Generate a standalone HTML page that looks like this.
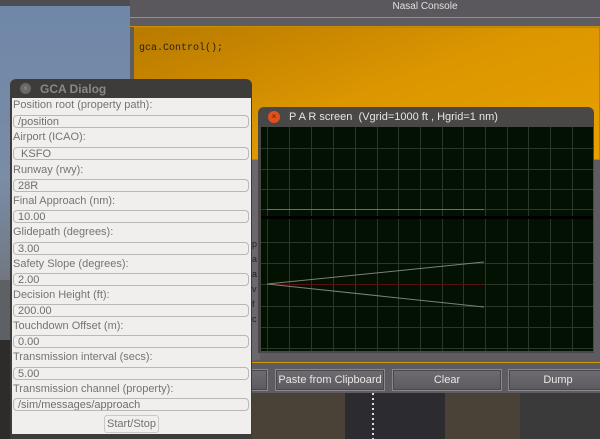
<!DOCTYPE html>
<html><head><meta charset="utf-8"><style>
*{margin:0;padding:0;box-sizing:border-box}
body{width:600px;height:439px;overflow:hidden;position:relative;font-family:"Liberation Sans","DejaVu Sans",sans-serif;background:#4a4236}
.abs{position:absolute}
.lbl{position:absolute;left:14px;font-size:11px;color:#747474;line-height:13px}
.fld{position:absolute;left:13px;width:236px;height:13px;border:1px solid #b8b8b8;border-radius:4px;background:#f0efed;font-size:11px;color:#6e6e6e;line-height:12px;padding-left:4px;overflow:hidden}
.btn{position:absolute;top:369px;height:22px;background:linear-gradient(#6e6c70,#5c5a5e);border:1px solid #8a888c;color:#e8e8e8;font-size:11px;text-align:center;line-height:20px;box-shadow:inset 0 0 0 1px #4a484c}
</style></head><body>
<div class="abs" style="left:0;top:0;width:130px;height:300px;background:linear-gradient(#6f87a8,#7a8ca6 60%,#6f737a)"></div>
<div class="abs" style="left:0;top:280px;width:130px;height:60px;background:#5d6064"></div>
<div class="abs" style="left:0;top:340px;width:130px;height:99px;background:#2e2c2a"></div>
<div class="abs" style="left:0;top:0;width:130px;height:6px;background:#4e4e52"></div>
<div class="abs" style="left:252px;top:393px;width:348px;height:46px;background:#4a4236"></div>
<div class="abs" style="left:345px;top:393px;width:100px;height:46px;background:#2c2c30"></div>
<div class="abs" style="left:520px;top:393px;width:80px;height:46px;background:#3a3a3a"></div>
<div class="abs" style="left:372px;top:393px;width:2px;height:46px;background:repeating-linear-gradient(#ddd 0 2px,transparent 2px 5px)"></div>
<div class="abs" style="left:130px;top:0;width:470px;height:393px;background:#5e5c60"></div>
<div class="abs" style="left:130px;top:0;width:470px;height:17px;background:#5a585c;color:#e0e0e0;font-size:10px;text-align:center;line-height:14px;padding-left:120px">Nasal Console</div>
<div class="abs" style="left:130px;top:17px;width:470px;height:1px;background:#c89000"></div>
<div class="abs" style="left:130px;top:26px;width:470px;height:1px;background:#c89000"></div>
<div class="abs" style="left:134px;top:27px;width:466px;height:133px;background:linear-gradient(160deg,#b87a00,#dc9600 50%,#e8a000);border:1px solid #c08000"></div>
<div class="abs" style="left:139px;top:43px;font-family:'Liberation Mono',monospace;font-size:10px;color:#222">gca.Control();</div>
<div class="abs" style="left:252px;top:160px;width:8px;height:200px;background:#6a686c"></div>
<div class="abs" style="left:252px;top:237px;font-size:9px;color:#222;line-height:15px">p<br>a<br>a<br>v<br>f<br>c</div>
<div class="abs" style="left:130px;top:362px;width:470px;height:1px;background:#d09a00"></div>
<div class="btn" style="left:250px;width:18px"></div>
<div class="btn" style="left:275px;width:110px">Paste from Clipboard</div>
<div class="btn" style="left:392px;width:110px">Clear</div>
<div class="btn" style="left:508px;width:100px">Dump</div>
<div class="abs" style="left:10px;top:79px;width:242px;height:360px;background:#3e3c3a;border-radius:6px 6px 0 0"></div>
<div class="abs" style="left:20px;top:83px;width:11px;height:11px;border-radius:50%;background:#6a6866;color:#9a9896;font-size:8px;text-align:center;line-height:11px">×</div>
<div class="abs" style="left:40px;top:82px;font-size:12px;color:#8a8886;font-weight:bold">GCA Dialog</div>
<div class="abs" style="left:12px;top:98px;width:239px;height:336px;background:#f0efed">
<div class="lbl" style="left:1px;top:1px">Position root (property path):</div>
<div class="fld" style="left:1px;top:17px">/position</div>
<div class="lbl" style="left:1px;top:33px">Airport (ICAO):</div>
<div class="fld" style="left:1px;top:49px">&nbsp;KSFO</div>
<div class="lbl" style="left:1px;top:66px">Runway (rwy):</div>
<div class="fld" style="left:1px;top:81px">28R</div>
<div class="lbl" style="left:1px;top:97px">Final Approach (nm):</div>
<div class="fld" style="left:1px;top:112px">10.00</div>
<div class="lbl" style="left:1px;top:128px">Glidepath (degrees):</div>
<div class="fld" style="left:1px;top:144px">3.00</div>
<div class="lbl" style="left:1px;top:160px">Safety Slope (degrees):</div>
<div class="fld" style="left:1px;top:175px">2.00</div>
<div class="lbl" style="left:1px;top:191px">Decision Height (ft):</div>
<div class="fld" style="left:1px;top:206px">200.00</div>
<div class="lbl" style="left:1px;top:222px">Touchdown Offset (m):</div>
<div class="fld" style="left:1px;top:237px">0.00</div>
<div class="lbl" style="left:1px;top:253px">Transmission interval (secs):</div>
<div class="fld" style="left:1px;top:269px">5.00</div>
<div class="lbl" style="left:1px;top:285px">Transmission channel (property):</div>
<div class="fld" style="left:1px;top:300px">/sim/messages/approach</div>
<div class="abs" style="left:92px;top:317px;width:55px;height:18px;border:1px solid #c8c8c8;border-radius:3px;font-size:11px;color:#707070;text-align:center;line-height:16px">Start/Stop</div>
</div>
<div class="abs" style="left:258px;top:107px;width:336px;height:246px;background:#4a4846;border-radius:6px 6px 0 0"></div>
<div class="abs" style="left:268px;top:111px;width:12px;height:12px;border-radius:50%;background:#e0501c;color:#5a1a00;font-size:8px;text-align:center;line-height:12px">×</div>
<div class="abs" style="left:289px;top:111px;font-size:11px;color:#e6e6e6;white-space:pre">P A R screen  (Vgrid=1000 ft , Hgrid=1 nm)</div>
<svg class="abs" style="left:261px;top:127px" width="332" height="224" viewBox="261 127 332 224">
<rect x="261" y="127" width="332" height="224" fill="#021102"/>
<g stroke="#2c372c" stroke-width="1">
<path d="M267.5 127V351M289.5 127V351M311.5 127V351M333.5 127V351M355.5 127V351M377.5 127V351M398.5 127V351M420.5 127V351M442.5 127V351M463.5 127V351M485.5 127V351M507.5 127V351M528.5 127V351M550.5 127V351M572.5 127V351"/>
<path d="M261 148.5H593M261 169.5H593M261 189.5H593M261 209.5H593M261 242.5H593M261 263.5H593M261 284.5H593M261 306.5H593M261 327.5H593M261 348.5H593"/>
</g>
<rect x="261" y="216" width="332" height="3" fill="#000"/>
<path d="M267 209.5H484" stroke="#6a706a"/>
<path d="M267 284.5H484" stroke="#5a1010"/>
<path d="M267 284L484 262M267 284L484 307" stroke="#7a807a"/>
</svg>
</body></html>
